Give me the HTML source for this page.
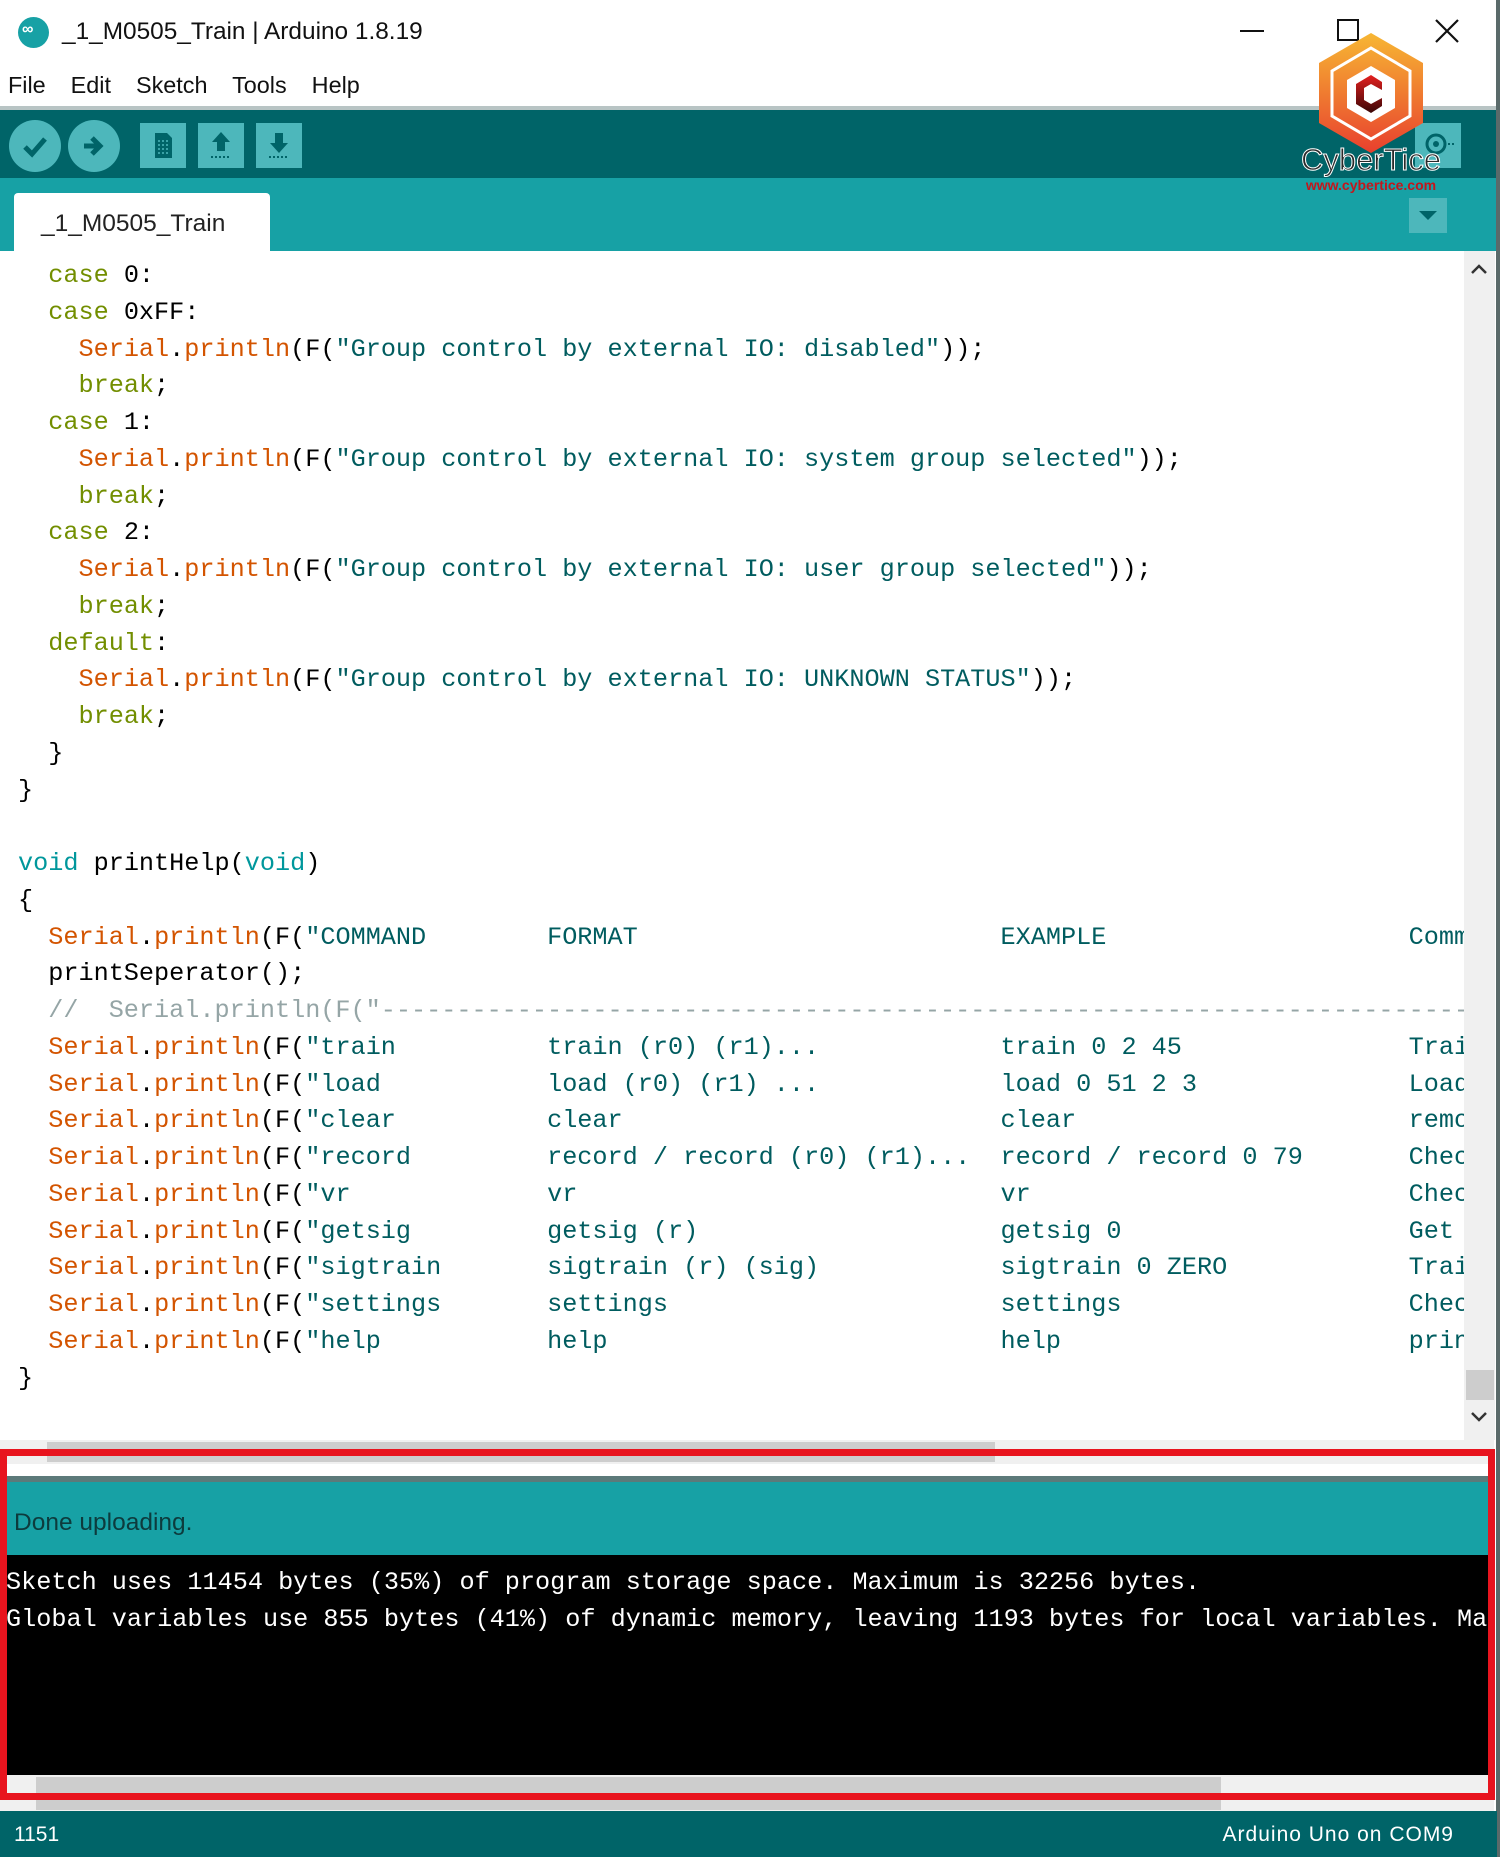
<!DOCTYPE html>
<html><head><meta charset="utf-8"><style>
*{margin:0;padding:0;box-sizing:border-box}
body{width:1500px;height:1857px;position:relative;background:#fff;overflow:hidden;font-family:"Liberation Sans",sans-serif}
.a{position:absolute;white-space:nowrap}
#code{position:absolute;left:18px;top:258px;width:1446px;height:1182px;overflow:hidden;font-family:"Liberation Mono",monospace;font-size:25.2px;line-height:36.75px;white-space:pre;color:#000}
.k{color:#728e00}.t{color:#00979c}.o{color:#d35400}.s{color:#005c5f}.c{color:#95a5a6}
.btn{position:absolute;background:#4db7bb}
</style></head><body>
<!-- title bar -->
<div class="a" style="left:18px;top:17px;width:31px;height:31px;border-radius:50%;background:#17a1a5"></div>
<div class="a" style="left:22px;top:21px;color:#fff;font-size:16px;font-weight:bold">∞</div>
<div class="a" style="left:62px;top:18px;font-size:24.4px;color:#111">_1_M0505_Train | Arduino 1.8.19</div>
<div class="a" style="left:1240px;top:30px;width:24px;height:2px;background:#111"></div>
<div class="a" style="left:1337px;top:19px;width:22px;height:22px;border:2px solid #111"></div>
<svg class="a" style="left:1434px;top:18px" width="26" height="26"><path d="M2 2L24 24M24 2L2 24" stroke="#111" stroke-width="2.2"/></svg>
<div class="a" style="left:8px;top:72px;font-size:23.4px;color:#111;word-spacing:6px">File&nbsp; Edit&nbsp; Sketch&nbsp; Tools&nbsp; Help</div>
<div class="a" style="left:0;top:106px;width:1500px;height:4px;background:#b8c4c4"></div>
<!-- toolbar -->
<div class="a" style="left:0;top:110px;width:1497px;height:68px;background:#006468"></div>
<div class="btn" style="left:9px;top:120px;width:52px;height:52px;border-radius:50%"></div>
<svg class="a" style="left:9px;top:120px" width="52" height="52"><path d="M16 27L23 34L36 19" stroke="#006468" stroke-width="5" fill="none"/></svg>
<div class="btn" style="left:68px;top:120px;width:52px;height:52px;border-radius:50%"></div>
<svg class="a" style="left:68px;top:120px" width="52" height="52"><path d="M16 26H30M24 18L32 26L24 34" stroke="#006468" stroke-width="5" fill="none"/></svg>
<div class="btn" style="left:140px;top:123px;width:46px;height:45px"></div>
<svg class="a" style="left:140px;top:123px" width="46" height="45"><path d="M15 10H27L32 15V35H15Z" fill="#006468"/><path d="M18 18h11M18 22h11M18 26h11M18 30h11" stroke="#4db7bb" stroke-width="1.5" stroke-dasharray="2 2"/></svg>
<div class="btn" style="left:198px;top:123px;width:46px;height:45px"></div>
<svg class="a" style="left:198px;top:123px" width="46" height="45"><path d="M23 9L32 19H27V28H19V19H14Z" fill="#006468"/><path d="M13 34H33" stroke="#006468" stroke-width="2" stroke-dasharray="2 2"/></svg>
<div class="btn" style="left:256px;top:123px;width:46px;height:45px"></div>
<svg class="a" style="left:256px;top:123px" width="46" height="45"><path d="M23 30L32 20H27V10H19V20H14Z" fill="#006468"/><path d="M13 34H33" stroke="#006468" stroke-width="2" stroke-dasharray="2 2"/></svg>
<div class="btn" style="left:1415px;top:123px;width:46px;height:45px"></div>
<svg class="a" style="left:1415px;top:123px" width="46" height="45"><circle cx="21" cy="21" r="9" stroke="#006468" stroke-width="3" fill="none"/><circle cx="21" cy="21" r="3" fill="#006468"/><path d="M33 21h6" stroke="#006468" stroke-width="2" stroke-dasharray="2 2"/></svg>
<!-- tab bar -->
<div class="a" style="left:0;top:178px;width:1497px;height:73px;background:#17a1a5"></div>
<div class="a" style="left:14px;top:193px;width:256px;height:58px;background:#fff;border-radius:4px 4px 0 0"></div>
<div class="a" style="left:41px;top:210px;font-size:24.5px;color:#222">_1_M0505_Train</div>
<div class="a" style="left:1409px;top:198px;width:38px;height:35px;background:#4db7bb"></div>
<svg class="a" style="left:1409px;top:198px" width="38" height="35"><path d="M10 13H28L19 22Z" fill="#006468"/></svg>
<!-- logo -->
<svg class="a" style="left:1298px;top:30px" width="150" height="170">
<defs><linearGradient id="g" x1="0" y1="0" x2="0" y2="1"><stop offset="0" stop-color="#f7b733"/><stop offset="1" stop-color="#e8402e"/></linearGradient>
<linearGradient id="r" x1="0" y1="0" x2="0" y2="1"><stop offset="0" stop-color="#e5201f"/><stop offset="1" stop-color="#3a0606"/></linearGradient></defs>
<polygon points="73,3 125,33 125,93 73,123 21,93 21,33" fill="url(#g)"/>
<polygon points="73,18 112,41 112,86 73,109 34,86 34,41" fill="none" stroke="#fff" stroke-width="3"/>
<polygon points="73,36 97,50 97,78 73,92 49,78 49,50" fill="#fff"/>
<path d="M84 52L73 45L58 54V74L73 83L84 76V68L73 74L66 70V58L73 54L84 60Z" fill="url(#r)"/>
<text x="73" y="140" text-anchor="middle" font-family="Liberation Sans" font-size="31" fill="#2a2a2a" stroke="#fff" stroke-width="1">CyberTice</text>
<text x="73" y="160" text-anchor="middle" font-family="Liberation Sans" font-weight="bold" font-size="14" fill="#c4161c">www.cybertice.com</text>
</svg>
<!-- editor -->
<div id="code">  <span class="k">case</span> 0:
  <span class="k">case</span> 0xFF:
    <span class="o">Serial</span>.<span class="o">println</span>(F(<span class="s">"Group control by external IO: disabled"</span>));
    <span class="k">break</span>;
  <span class="k">case</span> 1:
    <span class="o">Serial</span>.<span class="o">println</span>(F(<span class="s">"Group control by external IO: system group selected"</span>));
    <span class="k">break</span>;
  <span class="k">case</span> 2:
    <span class="o">Serial</span>.<span class="o">println</span>(F(<span class="s">"Group control by external IO: user group selected"</span>));
    <span class="k">break</span>;
  <span class="k">default</span>:
    <span class="o">Serial</span>.<span class="o">println</span>(F(<span class="s">"Group control by external IO: UNKNOWN STATUS"</span>));
    <span class="k">break</span>;
  }
}

<span class="t">void</span> printHelp(<span class="t">void</span>)
{
  <span class="o">Serial</span>.<span class="o">println</span>(F(<span class="s">"COMMAND        FORMAT                        EXAMPLE                    Comment</span>
  printSeperator();
  <span class="c">//  Serial.println(F("-------------------------------------------------------------------------------------------------</span>
  <span class="o">Serial</span>.<span class="o">println</span>(F(<span class="s">"train          train (r0) (r1)...            train 0 2 45               Train</span>
  <span class="o">Serial</span>.<span class="o">println</span>(F(<span class="s">"load           load (r0) (r1) ...            load 0 51 2 3              Load</span>
  <span class="o">Serial</span>.<span class="o">println</span>(F(<span class="s">"clear          clear                         clear                      remove</span>
  <span class="o">Serial</span>.<span class="o">println</span>(F(<span class="s">"record         record / record (r0) (r1)...  record / record 0 79       Check</span>
  <span class="o">Serial</span>.<span class="o">println</span>(F(<span class="s">"vr             vr                            vr                         Check</span>
  <span class="o">Serial</span>.<span class="o">println</span>(F(<span class="s">"getsig         getsig (r)                    getsig 0                   Get</span>
  <span class="o">Serial</span>.<span class="o">println</span>(F(<span class="s">"sigtrain       sigtrain (r) (sig)            sigtrain 0 ZERO            Train</span>
  <span class="o">Serial</span>.<span class="o">println</span>(F(<span class="s">"settings       settings                      settings                   Check</span>
  <span class="o">Serial</span>.<span class="o">println</span>(F(<span class="s">"help           help                          help                       print</span>
}</div>
<!-- vertical scrollbar -->
<div class="a" style="left:1464px;top:251px;width:31px;height:1189px;background:#f0f0f0"></div>
<svg class="a" style="left:1468px;top:260px" width="22" height="18"><path d="M4 13L11 6L18 13" stroke="#333" stroke-width="2.5" fill="none"/></svg>
<div class="a" style="left:1466px;top:1370px;width:28px;height:30px;background:#cdcdcd"></div>
<svg class="a" style="left:1468px;top:1408px" width="22" height="18"><path d="M4 5L11 12L18 5" stroke="#333" stroke-width="2.5" fill="none"/></svg>
<div class="a" style="left:1496px;top:0;width:4px;height:1857px;background:#5a6a6a"></div>
<!-- editor h scrollbar -->
<div class="a" style="left:0;top:1440px;width:1494px;height:24px;background:#f0f0f0"></div>
<div class="a" style="left:47px;top:1442px;width:948px;height:20px;background:#cdcdcd"></div>
<!-- message area -->
<div class="a" style="left:0;top:1476px;width:1494px;height:6px;background:#5c7a7a"></div>
<div class="a" style="left:0;top:1482px;width:1494px;height:73px;background:#17a1a5"></div>
<div class="a" style="left:14px;top:1509px;font-size:24.5px;color:#0d3b3d">Done uploading.</div>
<div class="a" style="left:0;top:1555px;width:1494px;height:220px;background:#000"></div>
<div class="a" style="left:6px;top:1565px;width:1488px;overflow:hidden;white-space:pre;font-family:'Liberation Mono',monospace;font-size:25.2px;line-height:36.5px;color:#fff">Sketch uses 11454 bytes (35%) of program storage space. Maximum is 32256 bytes.
Global variables use 855 bytes (41%) of dynamic memory, leaving 1193 bytes for local variables. Maximum</div>
<div class="a" style="left:0;top:1775px;width:1494px;height:36px;background:#f0f0f0"></div>
<div class="a" style="left:36px;top:1777px;width:1185px;height:16px;background:#cdcdcd"></div>
<div class="a" style="left:36px;top:1800px;width:1185px;height:10px;background:#cdcdcd"></div>
<!-- red box -->
<div class="a" style="left:0;top:1449px;width:1495px;height:351px;border:7px solid #e8141e"></div>
<!-- status bar -->
<div class="a" style="left:0;top:1811px;width:1497px;height:46px;background:#006468"></div>
<div class="a" style="left:14px;top:1823px;font-size:21px;color:#fff">1151</div>
<div class="a" style="left:1160px;top:1823px;width:294px;text-align:right;font-size:21px;color:#fff;letter-spacing:1px">Arduino Uno on COM9</div>
</body></html>
